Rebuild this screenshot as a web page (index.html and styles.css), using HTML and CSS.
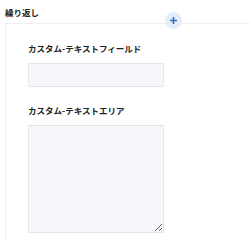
FILE: index.html
```html
<!DOCTYPE html>
<html lang="ja">
<head>
<meta charset="utf-8">
<link rel="stylesheet" href="styles.css">
</head>
<body>
<div class="page">
  <div class="title">繰り返し</div>
  <div class="card">
    <button class="add" aria-label="追加">
      <svg width="9" height="9" viewBox="0 0 9 9"><path d="M4.5 1v7M1 4.5h7" stroke="#3d6fb8" stroke-width="1.6" fill="none"/></svg>
    </button>
    <div class="field">
      <label class="label">カスタム-テキストフィールド</label>
      <input class="input" type="text">
    </div>
    <div class="field">
      <label class="label">カスタム-テキストエリア</label>
      <textarea class="textarea"></textarea>
    </div>
  </div>
</div>
</body>
</html>
```
FILE: styles.css
```css
html, body {
  margin: 0;
  padding: 0;
  background: #fff;
}
body {
  font-family: "Noto Sans CJK JP", "Noto Sans", sans-serif;
  color: #222;
  overflow: hidden;
  width: 250px;
  height: 240px;
}
.page {
  padding: 6px 0 0 5px;
  box-sizing: border-box;
  width: 250px;
}
.title {
  font-size: 8.5px;
  font-weight: 700;
  line-height: 12px;
  height: 12px;
}
.card {
  position: relative;
  margin-top: 5px;
  border-top: 1px solid #efeff1;
  border-left: 1px solid #efeff1;
  padding: 18px 0 0 22px;
  height: 217px;
  box-sizing: border-box;
}
.add {
  position: absolute;
  left: 159px;
  top: -12px;
  width: 17px;
  height: 17px;
  border-radius: 50%;
  border: none;
  padding: 0;
  background: #e4edfa;
  display: flex;
  align-items: center;
  justify-content: center;
}
.field {
  display: flex;
  flex-direction: column;
}
.label {
  font-size: 8.5px;
  font-weight: 700;
  line-height: 12px;
  margin-bottom: 9px;
}
.input {
  width: 136px;
  height: 24px;
  box-sizing: border-box;
  background: #f6f6fb;
  border: 1px solid #e4e4ea;
  border-radius: 2px;
  margin: 0 0 17px 0;
  padding: 0;
}
.textarea {
  width: 136px;
  height: 108px;
  box-sizing: border-box;
  background: #f6f6fb;
  border: 1px solid #e4e4ea;
  border-radius: 2px;
  margin: 0;
  padding: 0;
}
```
